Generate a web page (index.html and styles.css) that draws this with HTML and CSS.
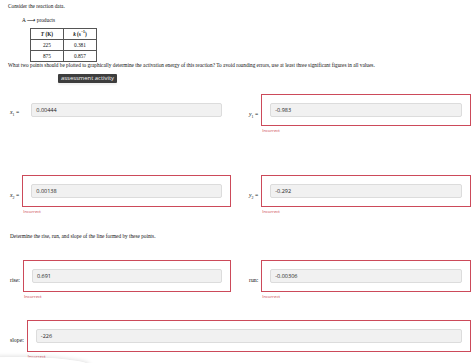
FILE: index.html
```html
<!DOCTYPE html>
<html>
<head>
<meta charset="utf-8">
<link rel="stylesheet" href="styles.css">
</head>
<body>
<div class="page">
  <p class="intro">Consider the reaction data.</p>
  <p class="reaction">A <span class="arrow">⟶</span> products</p>
  <table class="data">
    <tr><th><i>T</i> (K)</th><th><i>k</i> (s<sup>−1</sup>)</th></tr>
    <tr><td>225</td><td>0.381</td></tr>
    <tr><td>875</td><td>0.857</td></tr>
  </table>
  <p class="question">What two points should be plotted to graphically determine the activation energy of this reaction? To avoid rounding errors, use at least three significant figures in all values.</p>
  <div class="badge">assessment activity</div>

  <div class="row r1">
    <div class="cell">
      <span class="label first"><i>x</i><sub>1</sub> =</span>
      <div class="field"><div class="box plain"><div class="input">0.00444</div></div></div>
    </div>
    <div class="cell">
      <span class="label"><i>y</i><sub>1</sub> =</span>
      <div class="field"><div class="box wrong"><div class="input">-0.983</div></div><div class="err">Incorrect</div></div>
    </div>
  </div>

  <div class="row r2">
    <div class="cell">
      <span class="label"><i>x</i><sub>2</sub> =</span>
      <div class="field"><div class="box wrong"><div class="input">0.00138</div></div><div class="err">Incorrect</div></div>
    </div>
    <div class="cell">
      <span class="label"><i>y</i><sub>2</sub> =</span>
      <div class="field"><div class="box wrong"><div class="input">-0.292</div></div><div class="err">Incorrect</div></div>
    </div>
  </div>

  <p class="question2">Determine the rise, run, and slope of the line formed by these points.</p>

  <div class="row r3">
    <div class="cell">
      <span class="label">rise:</span>
      <div class="field"><div class="box wrong"><div class="input">0.691</div></div><div class="err">Incorrect</div></div>
    </div>
    <div class="cell">
      <span class="label">run:</span>
      <div class="field"><div class="box wrong"><div class="input">-0.00306</div></div><div class="err">Incorrect</div></div>
    </div>
  </div>

  <div class="row single r4">
    <div class="cell">
      <span class="label">slope:</span>
      <div class="field"><div class="box wrong"><div class="input">-226</div></div><div class="err">Incorrect</div></div>
    </div>
  </div>
</div>
<div class="fade"></div>
</body>
</html>
```

FILE: styles.css
```css
html, body {
  margin: 0;
  padding: 0;
  background: #ffffff;
}
body {
  width: 474px;
  height: 363px;
  overflow: hidden;
  position: relative;
  font-family: "Liberation Serif", "Times New Roman", serif;
  font-size: 5.3px;
  color: #111;
}
.page {
  padding: 0 3px 0 10px;
}
p {
  margin: 0;
  line-height: 6px;
}
.intro {
  padding-top: 3px;
  margin-left: -2px;
}
.reaction {
  margin-top: 8px;
  padding-left: 12px;
}
.arrow {
  font-size: 6px;
  font-family: "DejaVu Sans", sans-serif;
}
.data {
  margin-top: 5px;
  margin-left: 20px;
  border-collapse: collapse;
  width: 67px;
}
.data th, .data td {
  border: 1px solid #555;
  height: 10px;
  padding: 0;
  text-align: center;
  font-size: 5.3px;
  width: 33px;
}
.data th {
  font-weight: bold;
}
.data sup {
  font-size: 3.8px;
  line-height: 0;
}
.question {
  margin-top: 0px;
  margin-left: -2px;
}
.badge {
  margin-top: 6px;
  margin-left: 48px;
  width: 59px;
  height: 9px;
  line-height: 9px;
  background: #3d3d3d;
  color: #f4f4f4;
  font-family: "Open Sans", "Liberation Sans", sans-serif;
  font-size: 5.9px;
  text-align: center;
  border-radius: 1px;
  box-shadow: 0 2px 2px rgba(0,0,0,0.06);
}
.row {
  display: grid;
  grid-template-columns: 221px 1fr;
  column-gap: 18px;
}
.row.single {
  grid-template-columns: 1fr;
}
.r1 { margin-top: 11px; }
.r2 { margin-top: 42px; }
.r3 { margin-top: 21px; }
.r4 { margin-top: 21px; }
.question2 {
  margin-top: 19px;
}
.cell {
  display: flex;
  align-items: flex-start;
  gap: 3px;
}
.label {
  flex: none;
  margin-top: 17px;
  font-size: 5.8px;
  line-height: 6px;
}
.label.first {
  margin-top: 15px;
}
.label sub {
  font-size: 4px;
  line-height: 0;
}
.field {
  flex: 1;
  display: flex;
  flex-direction: column;
}
.box {
  padding: 8px 8px;
  border: 1.5px solid transparent;
}
.box.wrong {
  border-color: #cc4a5a;
}
.input {
  height: 12px;
  line-height: 12px;
  padding: 0 4px;
  background: #f1f1f1;
  border: 1px solid #dcdcdc;
  border-radius: 2px;
  font-family: "Open Sans", "Liberation Sans", sans-serif;
  font-size: 5.5px;
  color: #222;
}
.err {
  margin-top: 2px;
  padding-left: 1px;
  font-family: "Open Sans", "Liberation Sans", sans-serif;
  font-size: 4.2px;
  line-height: 5px;
  color: #c8363f;
}
.fade {
  position: absolute;
  left: -60px;
  bottom: -12px;
  width: 150px;
  height: 18px;
  border-radius: 50%;
  background: rgba(255,255,255,0.9);
  box-shadow: 0 -1px 4px rgba(0,0,0,0.12);
}
```
